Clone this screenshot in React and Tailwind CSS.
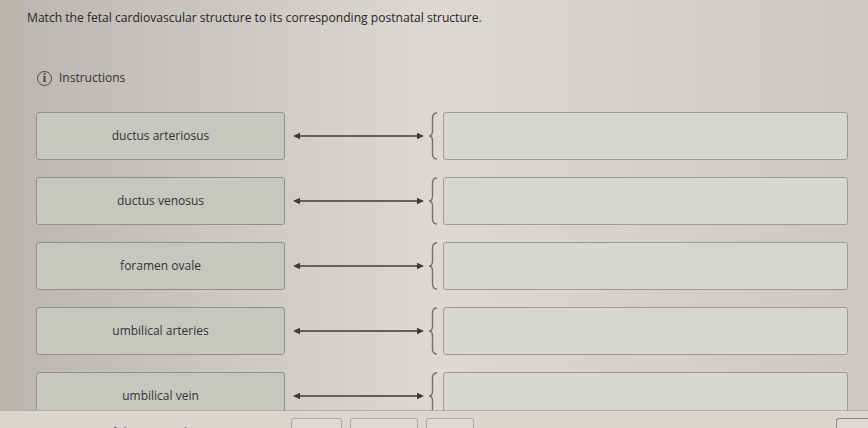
import React from "react";

const items = [
   "ductus arteriosus",
   "ductus venosus",
   "foramen ovale",
   "umbilical arteries",
   "umbilical vein",
];

const Arrow = () => (
   <svg width="131" height="10" viewBox="0 0 131 10" className="shrink-0">
      <line x1="4" y1="5" x2="127" y2="5" stroke="#3b3b3b" strokeWidth="1.6" />
      <path d="M0 5 L7 1.8 L7 8.2 Z" fill="#3b3b3b" />
      <path d="M131 5 L124 1.8 L124 8.2 Z" fill="#3b3b3b" />
   </svg>
);

const Brace = () => (
   <svg width="10" height="48" viewBox="0 0 10 48" className="shrink-0">
      <path
         d="M9 1 Q4.5 1 4.5 6 L4.5 19 Q4.5 24 1 24 Q4.5 24 4.5 29 L4.5 42 Q4.5 47 9 47"
         stroke="#707070"
         strokeWidth="1.4"
         fill="none"
      />
   </svg>
);

const Row = ({ label }) => (
   <div className="flex items-center">
      <div className="w-[249px] h-12 shrink-0 rounded-[3px] border border-[#8e908a] bg-[#c6c8c0] flex items-center justify-center text-[12px] text-[#333]">
         {label}
      </div>
      <div className="ml-2">
         <Arrow />
      </div>
      <div className="ml-1 flex items-center">
         <Brace />
      </div>
      <div className="ml-[5px] h-12 w-[405px] rounded-[3px] border border-[#9d9b97] bg-[#d8d6d1]" />
   </div>
);

export default function App() {
   return (
      <div
         className="h-[428px] w-[868px] overflow-hidden flex flex-col bg-gradient-to-r from-[#bab5af] via-[#dcd8d3] to-[#ccc8c3] text-[#262626]"
         style={{ fontFamily: "'Open Sans', 'Liberation Sans', sans-serif" }}
      >
         <main className="h-[410px] shrink-0 overflow-hidden pl-[27px]">
            <h1 className="pt-[10px] text-[12.1px] leading-4 font-medium">
               Match the fetal cardiovascular structure to its corresponding postnatal structure.
            </h1>

            <div className="mt-[44px] ml-[10px] flex items-center gap-[7px] h-4">
               <span className="w-[15px] h-[15px] rounded-full border border-[#4a4a4a] flex items-center justify-center text-[12px] leading-none font-bold text-[#3a3a3a] font-['Liberation_Serif',serif]">
                  i
               </span>
               <span className="text-[12px] text-[#333]">Instructions</span>
            </div>

            <div className="mt-[26px] ml-[9px] flex flex-col gap-[17px]">
               {items.map((item) => (
                  <Row key={item} label={item} />
               ))}
            </div>
         </main>

         <footer className="flex-1 border-t border-[#b3afa9] bg-[#d9d5cf] flex items-start pl-[35px] pt-[7px]">
            <span className="w-[250px] mt-[6px] text-[12px] text-[#3a3a3a]">
               Rate your confidence to submit your answer.
            </span>
            <div className="ml-[6px] flex gap-2">
               <button className="w-[51px] h-7 rounded-[3px] border border-[#a9a6a1] bg-[#dcd8d2] text-[11px] text-[#666]">
                  High
               </button>
               <button className="w-[68px] h-7 rounded-[3px] border border-[#a9a6a1] bg-[#dcd8d2] text-[11px] text-[#666]">
                  Medium
               </button>
               <button className="w-[48px] h-7 rounded-[3px] border border-[#a9a6a1] bg-[#dcd8d2] text-[11px] text-[#666]">
                  Low
               </button>
            </div>
            <button className="ml-auto w-[32px] h-7 rounded-l-[3px] border border-r-0 border-[#8f8c87] bg-[#dcd8d2] text-[11px] text-[#444]">
               Nxt
            </button>
         </footer>
      </div>
   );
}
